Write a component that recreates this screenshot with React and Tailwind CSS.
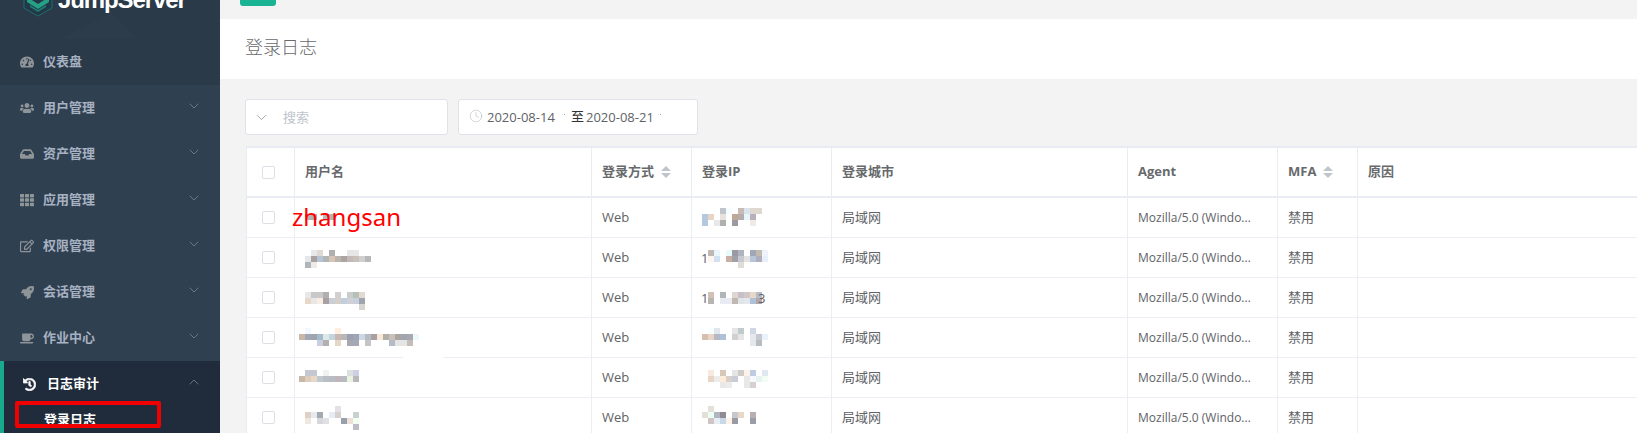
import React from 'react';
import { ChevronDown, ChevronUp, Clock } from 'lucide-react';
import { FaTachometerAlt, FaUsers, FaInbox, FaTh, FaRegEdit, FaRocket, FaCoffee, FaHistory } from 'react-icons/fa';

const fontStack = 'font-["Open_Sans","Noto_Sans_CJK_SC",sans-serif]';

const menu = [
  { label: '用户管理', Icon: FaUsers, size: 16 },
  { label: '资产管理', Icon: FaInbox, size: 14 },
  { label: '应用管理', Icon: FaTh, size: 14 },
  { label: '权限管理', Icon: FaRegEdit, size: 14 },
  { label: '会话管理', Icon: FaRocket, size: 13 },
  { label: '作业中心', Icon: FaCoffee, size: 15 },
];

// blurred-out values, one string per 6px row of the mosaic
const rows = [
  {
    user: ['. . . . . . . . . . .', 'b4b4b4 b0b0b0 . b8b8b8 b4b4b4 . . . . . .'],
    userTop: 'pt-[10px]',
    ipTop: 'pt-[10px]',
    ip: [
      '. . . c0c5cc f5fdfd . c8bab5 d8e5ee e0d8d0 e0d8d0',
      'b5c8dd e8d5c5 . e8e2de . c0a898 b5adad e8f5fa b8b0bc',
      'b5c8dd . e8e8e8 b0b0ae . 9a9aa0 . . eeeae6',
    ],
  },
  {
    user: [
      '. e6e8ec ded9d3 . b0b0b0 . . e6e6e6 e6e6e6',
      'e5e8e8 a8a3a0 b5c5d5 b0b5b8 d8c5b5 bbb5b0 aaa5a2 c5b8b8 c8c0bb d0d0d0 b8b8b8',
      'b0b5bb eeeae6',
    ],
    userTop: 'pt-[12px]',
    ipTop: 'pt-[12px]',
    ip: [
      '. c0b8b0 e8f5fd . e8fafa 9a9aa5 b0b5bd . a0a8b8 c0bab0 eef2fa',
      '. fff5ee d0e2f2 . c8b0a5 a0a0a8 c8c8d0 e5e2e2 b8c5d8 b0aeba e8eefa',
      '. . . . . . e0dcd8',
    ],
    ipLead: '1',
  },
  {
    user: [
      'e8e8e8 c8c8cc ccc8c8 b0b0b0 . d0d0d0 . c8cccc b5c0b8 e0dad2',
      'e8d8c8 e8e8e8 f8efe2 a8a0a5 c8d0d5 d5cfc8 c0cee0 d0d0d5 c8d0dd a0a5ad',
      '. . . . . . . . . d8d5d0',
    ],
    userTop: 'pt-[14px]',
    ipTop: 'pt-[14px]',
    ip: [
      '. d0c0b8 . b0b5b8 . e0d5d0 c8c0c8 d0c8c8 e8d8c8 b5bcc5',
      '. b8b5b0 . e8ecf2 e8ecf2 c0b8b0 e0e5e8 e2e8ec b0c0d5 b0a8a8',
    ],
    ipLead: '1',
    ipTail: '3',
  },
  {
    user: [
      '. f2f8ff . . . . fdeedd',
      'c8b8a8 a0a8b8 a0a5ad a5bcd0 dde8e8 c5d5e0 c8b8b0 b8b8b8 9aa0b0 a0a5b5 ccd8e5 b8bcc0 a8a0a5 f8e8d5 b0b0a8 c8c0bb aaa5a0 a0a5b0 a8a8b0 eef8fc',
      '. . . c8d0e0 b5b0b0 . e5d8c8 . a8a8b0 a5a8b5 . c5c5c8 . . . b5bcc5 e5e5e5 e5e5e5 c5bdb8',
    ],
    userClass: '-ml-[6px]',
    userTop: 'pt-[10px]',
    ipTop: 'pt-[10px]',
    ip: [
      '. f5ffff e0e8ee . . e5e5e5 c0cccc . d0d8e5',
      'd5c0b0 e8d5c5 b5b8c5 b0c0d8 . d0d0d0 e5e5e5 . e5e8ec c5c8d0 eaf2fa',
      '. . . . . . . . e2e8ec b8bcc0',
    ],
  },
  {
    user: [
      '. c5c8d0 c5c8d0 . eef2f0 . . . dde0e0 cdd0e0',
      'c8b8a8 e0ccbb e8d8c8 c0c8d0 b8c0c5 b8bcc5 c0b5b8 b8bcc0 eaf2e2 b8b8bc',
    ],
    userClass: '-ml-[6px]',
    userTop: 'pt-[12px]',
    ipTop: 'pt-[12px]',
    ip: [
      '. f8e8dd . d8c8b8 . e5e5e5 cfcbc8 fdf2e8 bdcce0 . e0e8f2',
      '. e8d5c5 ececec fdecd8 d8cfc8 c8ccd8 . e8e8e8 f5f8fd e8f2f0 f2fdf5',
      '. . . e8e8e8 ececec . . e8e8e8 d8d0d0',
    ],
  },
  {
    user: [
      '. . . . . e5e0e5',
      'dfd0c5 e8e8f0 a5aab0 . e5ecf5 d8d0d0 . . c8d0d0',
      'efe8e0 . d5d8dc e0e0e5 . . 95a0aa eee0d8 f0fff0',
      '. . . . . . . . bcbcc8',
    ],
    userTop: 'pt-[8px]',
    ipTop: 'pt-[8px]',
    ip: [
      '. e5e0da',
      'e5e0d5 e8fff5 b0b5c0 908a95 . c8c8cc e8d8c8 . b8b0b0',
      '. d0c5c5 e8eef5 c8d8e8 fdf2e8 9a9aa5 . . 9a9ca8',
    ],
  },
];

const Mosaic = ({ data, className = '' }) => {
  const width = Math.max(...data.map((r) => r.split(' ').length)) * 6;
  return (
    <svg width={width} height={data.length * 6} className={`block shrink-0 ${className}`} shapeRendering="crispEdges">
      {data.map((row, y) =>
        row.split(' ').map((c, x) =>
          c === '.' ? null : <rect key={`${x}-${y}`} x={x * 6} y={y * 6} width="6" height="6" fill={`#${c}`} />
        )
      )}
    </svg>
  );
};

const SortCaret = () => (
  <svg width="10" height="12" viewBox="0 0 10 12" className="ml-[7px] shrink-0">
    <path d="M5 0 10 5H0z" fill="#c0c4cc" />
    <path d="M0 7h10l-5 5z" fill="#c0c4cc" />
  </svg>
);

const Checkbox = () => <div className="w-[13px] h-[13px] ml-[15px] border border-[#dcdfe6] rounded-[2px] bg-white" />;

const Sidebar = () => (
  <aside className="w-[220px] h-[433px] shrink-0 bg-[#2f4050] overflow-hidden relative">
    <div className="h-[85px] bg-[#2a3a49]">
      <div className="h-[39px] overflow-hidden relative">
        <svg width="220" height="39" className="absolute left-0 top-0">
          <path d="M60 39 112 12 137 39z" fill="#2c3c4b" />
        </svg>
        <div className="relative flex items-start pl-[23px] -mt-[17px]">
          <svg width="30" height="34" viewBox="0 0 30 34" className="shrink-0">
            <path d="M15 1 29 9v16l-14 8-14-8V9z" fill="#22384a" stroke="#1f6f68" strokeWidth="1" />
            <path d="M4 14l11 7 11-7v5l-11 7-11-7z" fill="#26a184" />
            <path d="M7 22l8 5 8-5v2l-8 5-8-5z" fill="#1f7f70" />
          </svg>
          <span className="ml-[5px] text-[24px] leading-[34px] tracking-[-1.1px] font-bold text-white font-['Liberation_Sans',sans-serif]">JumpServer</span>
        </div>
      </div>
      <div className="h-[46px] pl-[20px] flex items-center text-[13px] font-bold text-[#a7b1c2]">
        <FaTachometerAlt size={14} className="w-[14px] text-[#8f9499]" />
        <span className="ml-[9px]">仪表盘</span>
      </div>
    </div>
    {menu.map(({ label, Icon, size }) => (
      <div key={label} className="h-[46px] pl-[20px] pr-[20px] flex items-center text-[13px] font-bold text-[#a7b1c2]">
        <span className="w-[14px] flex justify-center text-[#8f9499]"><Icon size={size} /></span>
        <span className="ml-[9px] flex-1">{label}</span>
        <ChevronDown size={16} strokeWidth={1} className="text-[#8a94a0] -mt-[4px] -mr-[2px]" />
      </div>
    ))}
    <div className="h-[72px] bg-[#202c3c] border-l-4 border-[#19aa8d] text-[13px] font-bold text-white">
      <div className="h-[46px] pl-[19px] pr-[20px] flex items-center">
        <FaHistory size={13} stroke="currentColor" strokeWidth={24} />
        <span className="ml-[11px] flex-1">日志审计</span>
        <ChevronUp size={16} strokeWidth={1} className="text-[#8a94a0] -mt-[4px] -mr-[2px]" />
      </div>
      <div className="pl-[40px] pt-[2px] leading-[20px] h-[26px]">登录日志</div>
    </div>
    <div className="absolute left-[15px] top-[401px] w-[146px] h-[27px] border-4 border-[#f00000] rounded-[2px]" />
  </aside>
);

const Toolbar = () => (
  <div className="flex gap-[10px] pl-[25px] pt-[20px] h-[67px]">
    <div className="w-[203px] h-[36px] bg-white border border-[#dfe2e8] rounded-[3px] flex items-center pl-[7px]">
      <ChevronDown size={17} strokeWidth={1.1} className="text-[#8a8f99]" />
      <span className="ml-[13px] pt-[2px] text-[13px] text-[#c0c4cc]">搜索</span>
    </div>
    <div className="w-[240px] h-[36px] bg-white border border-[#dfe2e8] rounded-[3px] flex items-center pl-[10px] text-[13px] text-[#606266]">
      <Clock size={14} strokeWidth={1.2} className="text-[#c0c4cc] -mt-[3px]" />
      <span className="ml-[4px] w-[77px] pt-[2px]">2020-08-14</span>
      <span className="w-[1px] h-[1px] bg-[#a0a4aa] -mt-[6px]" />
      <span className="text-[#303133] w-[15px] ml-[6px]">至</span>
      <span className="pt-[2px]">2020-08-21</span>
      <span className="w-[1px] h-[1px] bg-[#a0a4aa] ml-[6px] -mt-[6px]" />
    </div>
  </div>
);

const headers = [
  { label: '用户名', w: 'w-[297px]' },
  { label: '登录方式', w: 'w-[100px]', sort: true },
  { label: '登录IP', w: 'w-[140px]' },
  { label: '登录城市', w: 'w-[296px]' },
  { label: 'Agent', w: 'w-[150px]' },
  { label: 'MFA', w: 'w-[80px]', sort: true },
  { label: '原因', w: '' },
];

const LogTable = () => (
  <table className="w-[1391px] ml-[26px] table-fixed border-collapse bg-white border-t-2 border-l border-[#e9ecf3] text-[13px] text-[#606266]">
    <thead>
      <tr className="h-[50px] border-b-2 border-[#e9ecf3] text-left">
        <th className="w-[48px] border-r border-[#e9ecf3]"><Checkbox /></th>
        {headers.map((h) => (
          <th key={h.label} className={`${h.w} px-[10px] border-r border-[#e9ecf3] font-bold text-[#676a6c] last:border-r-0`}>
            <div className="flex items-center">
              {h.label}
              {h.sort && <SortCaret />}
            </div>
          </th>
        ))}
      </tr>
    </thead>
    <tbody>
      {rows.map((r, i) => (
        <tr key={i} className="h-[40px] border-b border-[#ebeef5]">
          <td className="border-r border-[#ebeef5]"><Checkbox /></td>
          <td className={`px-[10px] align-top border-r border-[#ebeef5] relative ${r.userTop}`}>
            <Mosaic data={r.user} className={r.userClass} />
            {i === 0 && (
              <span className="absolute left-[-3px] top-[4px] text-[24px] leading-[30px] text-[#ff0000] font-['Noto_Sans',sans-serif]">zhangsan</span>
            )}
            {i === 3 && <div className="absolute left-[108px] top-[37px] w-[40px] h-[4px] bg-white" />}
          </td>
          <td className="px-[10px] pt-[1px] border-r border-[#ebeef5]">Web</td>
          <td className={`px-[10px] align-top border-r border-[#ebeef5] relative ${r.ipTop}`}>
            <Mosaic data={r.ip} />
            {r.ipLead && <span className="absolute left-[9px] top-[11px]">{r.ipLead}</span>}
            {r.ipTail && <span className="absolute left-[66px] top-[11px]">{r.ipTail}</span>}
          </td>
          <td className="px-[10px] pt-[1px] border-r border-[#ebeef5]">局域网</td>
          <td className="px-[10px] pt-[1px] border-r border-[#ebeef5] text-[12px] whitespace-nowrap">Mozilla/5.0 (Windo...</td>
          <td className="px-[10px] pt-[1px] border-r border-[#ebeef5]">禁用</td>
          <td />
        </tr>
      ))}
    </tbody>
  </table>
);

export default function App() {
  return (
    <div className={`w-[1637px] h-[433px] flex overflow-hidden bg-[#f3f3f4] ${fontStack}`}>
      <Sidebar />
      <main className="flex-1 min-w-0 overflow-hidden">
        <div className="h-[19px] pl-[20px]">
          <div className="w-[36px] h-[6px] bg-[#1ab394] rounded-b-[3px]" />
        </div>
        <div className="h-[60px] bg-white pl-[25px] pb-[4px] flex items-center text-[18px] text-[#676a6c] font-light">登录日志</div>
        <Toolbar />
        <LogTable />
      </main>
    </div>
  );
}
